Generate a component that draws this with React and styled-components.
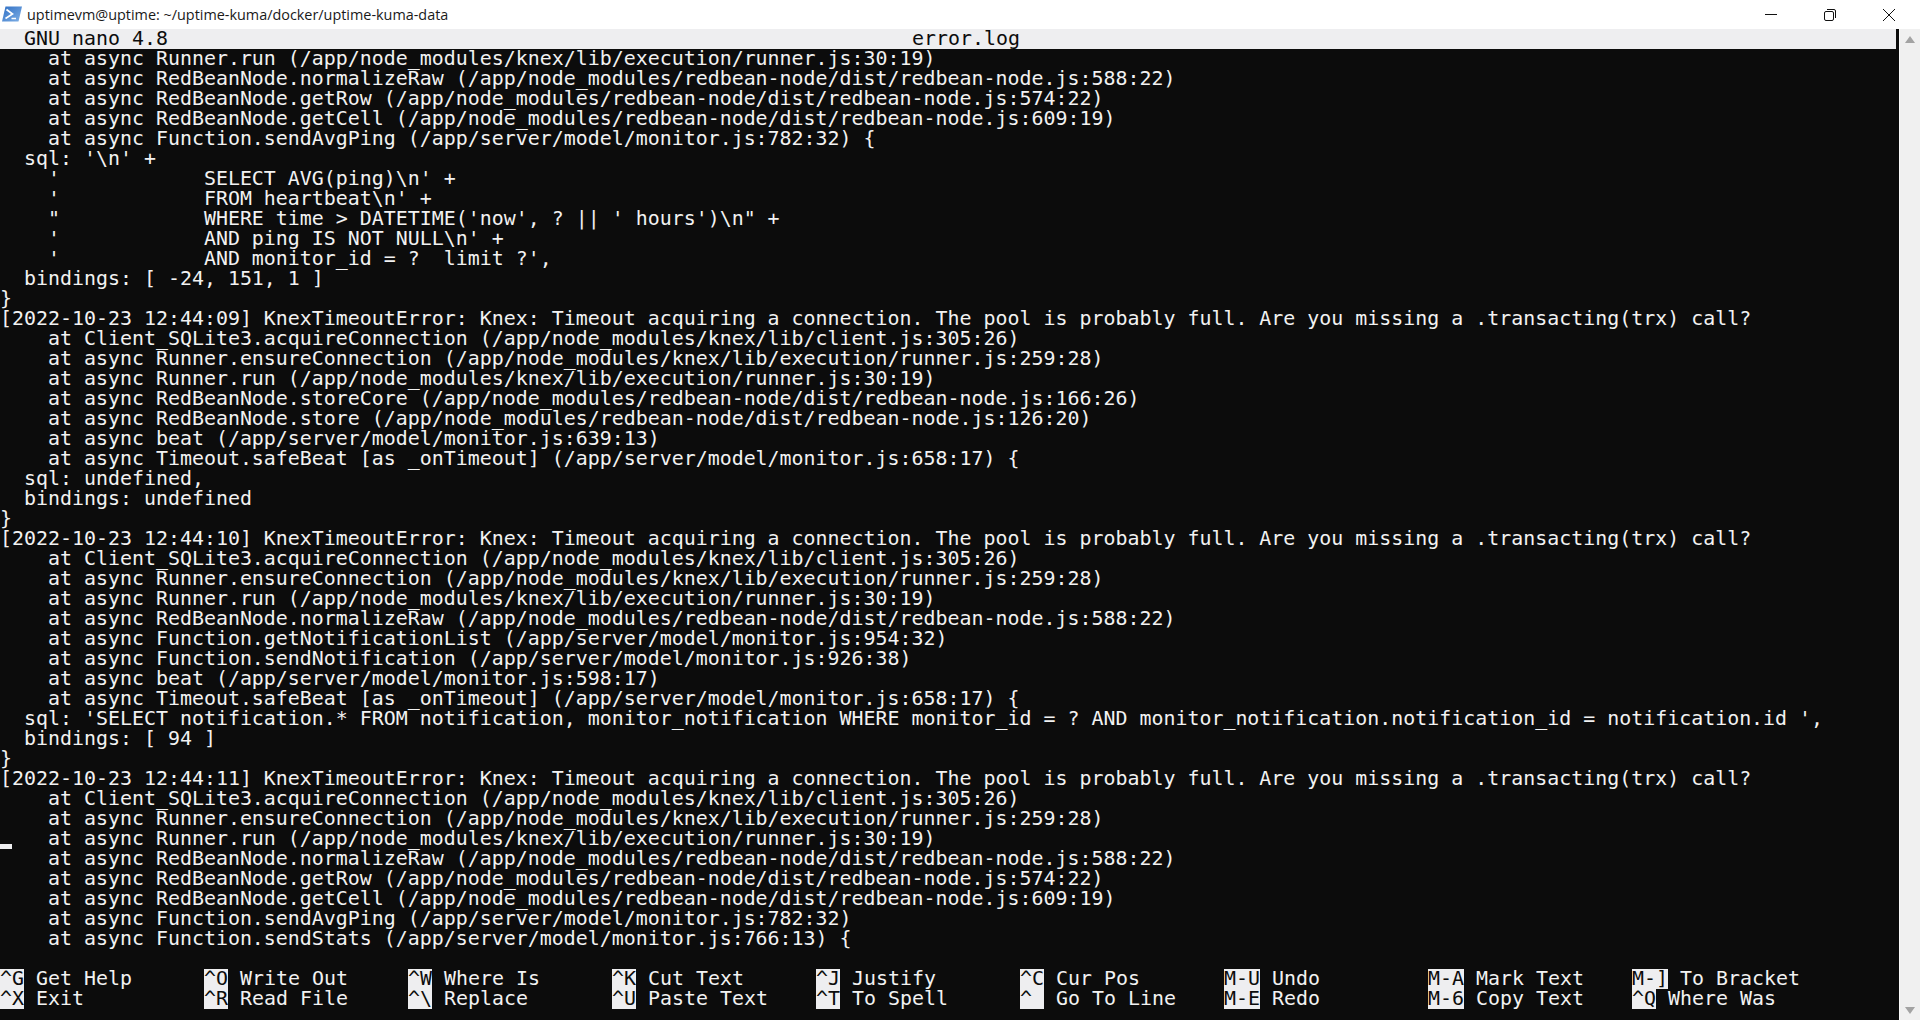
import React from "react";
import styled, { createGlobalStyle } from "styled-components";

const Global = createGlobalStyle`
  html, body { margin: 0; padding: 0; background: #0c0c0c; }
  #root { height: 100vh; }
`;

const Window = styled.div`
  display: flex;
  flex-direction: column;
  height: 1020px;
  overflow: hidden;
`;

const TitleBar = styled.header`
  flex: 0 0 29px;
  display: flex;
  align-items: center;
  background: #ffffff;
  padding-left: 2px;
`;

const AppIcon = styled.svg`
  width: 20px;
  height: 16px;
  flex: none;
  margin-bottom: 1px;
`;

const WindowTitle = styled.span`
  margin-left: 5px;
  flex: 1;
  font: 14.4px "Open Sans", "Noto Sans", sans-serif;
  color: #1a1a1a;
  white-space: pre;
  padding-bottom: 1px;
`;

const Controls = styled.div`
  display: flex;
  align-items: center;
  padding-right: 2px;
`;

const ControlButton = styled.button`
  width: 59px;
  height: 29px;
  padding: 0;
  border: 0;
  background: transparent;
  display: flex;
  align-items: center;
  justify-content: center;
`;

const ControlIcon = styled.svg`
  width: 14px;
  height: 14px;
  fill: none;
  stroke: #111;
  stroke-width: 1;
`;

const Body = styled.div`
  flex: 1;
  display: flex;
  min-height: 0;
`;

const Terminal = styled.main`
  flex: 1;
  background: #0c0c0c;
  padding-right: 3px;
  color: #f2f2f2;
  font: 19.93px/20px "DejaVu Sans Mono", monospace;
  display: flex;
  flex-direction: column;
`;

const NanoHeader = styled.div`
  flex: 0 0 20px;
  background: #eeeef0;
  color: #0c0c0c;
  display: grid;
  grid-template-columns: 912px 1fr;
  padding-left: 24px;
  white-space: pre;
`;

const NanoFile = styled.span`
  margin-left: -24px;
`;

const Buffer = styled.div`
  flex: 0 0 920px;
`;

const Line = styled.div`
  position: relative;
  height: 20px;
  white-space: pre;
`;

const Cursor = styled.span`
  position: absolute;
  left: 0;
  bottom: 0;
  width: 12px;
  height: 5px;
  background: #eeeef0;
`;

const Shortcuts = styled.div`
  display: grid;
  grid-template-columns: repeat(9, 204px);
  grid-auto-flow: column;
  grid-template-rows: 20px 20px;
`;

const Shortcut = styled.div`
  display: flex;
  gap: 12px;
  white-space: pre;
`;

const Key = styled.span`
  background: #eeeef0;
  color: #0c0c0c;
`;

const ScrollTrack = styled.aside`
  flex: 0 0 20px;
  border-left: 1px solid #fafafa;
  background: #f0f0f0;
  display: flex;
  flex-direction: column;
  align-items: center;
  justify-content: space-between;
  padding: 7px 0 6px;
`;

const Arrow = styled.svg`
  width: 10px;
  height: 7px;
  fill: #a3a3a3;
  margin-left: -1px;
`;

const lines = [
  "    at async Runner.run (/app/node_modules/knex/lib/execution/runner.js:30:19)",
  "    at async RedBeanNode.normalizeRaw (/app/node_modules/redbean-node/dist/redbean-node.js:588:22)",
  "    at async RedBeanNode.getRow (/app/node_modules/redbean-node/dist/redbean-node.js:574:22)",
  "    at async RedBeanNode.getCell (/app/node_modules/redbean-node/dist/redbean-node.js:609:19)",
  "    at async Function.sendAvgPing (/app/server/model/monitor.js:782:32) {",
  "  sql: '\\n' +",
  "    '            SELECT AVG(ping)\\n' +",
  "    '            FROM heartbeat\\n' +",
  "    \"            WHERE time > DATETIME('now', ? || ' hours')\\n\" +",
  "    '            AND ping IS NOT NULL\\n' +",
  "    '            AND monitor_id = ?  limit ?',",
  "  bindings: [ -24, 151, 1 ]",
  "}",
  "[2022-10-23 12:44:09] KnexTimeoutError: Knex: Timeout acquiring a connection. The pool is probably full. Are you missing a .transacting(trx) call?",
  "    at Client_SQLite3.acquireConnection (/app/node_modules/knex/lib/client.js:305:26)",
  "    at async Runner.ensureConnection (/app/node_modules/knex/lib/execution/runner.js:259:28)",
  "    at async Runner.run (/app/node_modules/knex/lib/execution/runner.js:30:19)",
  "    at async RedBeanNode.storeCore (/app/node_modules/redbean-node/dist/redbean-node.js:166:26)",
  "    at async RedBeanNode.store (/app/node_modules/redbean-node/dist/redbean-node.js:126:20)",
  "    at async beat (/app/server/model/monitor.js:639:13)",
  "    at async Timeout.safeBeat [as _onTimeout] (/app/server/model/monitor.js:658:17) {",
  "  sql: undefined,",
  "  bindings: undefined",
  "}",
  "[2022-10-23 12:44:10] KnexTimeoutError: Knex: Timeout acquiring a connection. The pool is probably full. Are you missing a .transacting(trx) call?",
  "    at Client_SQLite3.acquireConnection (/app/node_modules/knex/lib/client.js:305:26)",
  "    at async Runner.ensureConnection (/app/node_modules/knex/lib/execution/runner.js:259:28)",
  "    at async Runner.run (/app/node_modules/knex/lib/execution/runner.js:30:19)",
  "    at async RedBeanNode.normalizeRaw (/app/node_modules/redbean-node/dist/redbean-node.js:588:22)",
  "    at async Function.getNotificationList (/app/server/model/monitor.js:954:32)",
  "    at async Function.sendNotification (/app/server/model/monitor.js:926:38)",
  "    at async beat (/app/server/model/monitor.js:598:17)",
  "    at async Timeout.safeBeat [as _onTimeout] (/app/server/model/monitor.js:658:17) {",
  "  sql: 'SELECT notification.* FROM notification, monitor_notification WHERE monitor_id = ? AND monitor_notification.notification_id = notification.id ',",
  "  bindings: [ 94 ]",
  "}",
  "[2022-10-23 12:44:11] KnexTimeoutError: Knex: Timeout acquiring a connection. The pool is probably full. Are you missing a .transacting(trx) call?",
  "    at Client_SQLite3.acquireConnection (/app/node_modules/knex/lib/client.js:305:26)",
  "    at async Runner.ensureConnection (/app/node_modules/knex/lib/execution/runner.js:259:28)",
  "    at async Runner.run (/app/node_modules/knex/lib/execution/runner.js:30:19)",
  "    at async RedBeanNode.normalizeRaw (/app/node_modules/redbean-node/dist/redbean-node.js:588:22)",
  "    at async RedBeanNode.getRow (/app/node_modules/redbean-node/dist/redbean-node.js:574:22)",
  "    at async RedBeanNode.getCell (/app/node_modules/redbean-node/dist/redbean-node.js:609:19)",
  "    at async Function.sendAvgPing (/app/server/model/monitor.js:782:32)",
  "    at async Function.sendStats (/app/server/model/monitor.js:766:13) {",
  " ",
];

const CURSOR_LINE = 39;

const shortcuts = [
  ["^G", "Get Help"], ["^X", "Exit"],
  ["^O", "Write Out"], ["^R", "Read File"],
  ["^W", "Where Is"], ["^\\", "Replace"],
  ["^K", "Cut Text"], ["^U", "Paste Text"],
  ["^J", "Justify"], ["^T", "To Spell"],
  ["^C", "Cur Pos"], ["^_", "Go To Line"],
  ["M-U", "Undo"], ["M-E", "Redo"],
  ["M-A", "Mark Text"], ["M-6", "Copy Text"],
  ["M-]", "To Bracket"], ["^Q", "Where Was"],
];

export default function App() {
  return (
    <Window>
      <Global />
      <TitleBar>
        <AppIcon viewBox="0 0 20 16">
          <defs>
            <linearGradient id="psh" x1="0" y1="0" x2="1" y2="1">
              <stop offset="0" stopColor="#2f6fc4" />
              <stop offset="1" stopColor="#7fb0e6" />
            </linearGradient>
          </defs>
          <path d="M3.5 0.5H20L16.5 15.5H0Z" fill="url(#psh)" />
          <path d="M4.5 3.5L10.5 8L3.5 12.5" fill="none" stroke="#fff" strokeWidth="1.7" />
          <path d="M9.5 12.5H14" fill="none" stroke="#fff" strokeWidth="1.5" />
        </AppIcon>
        <WindowTitle>uptimevm@uptime: ~/uptime-kuma/docker/uptime-kuma-data</WindowTitle>
        <Controls>
          <ControlButton aria-label="Minimize">
            <ControlIcon viewBox="0 0 14 14"><path d="M1 6.5H13" /></ControlIcon>
          </ControlButton>
          <ControlButton aria-label="Restore">
            <ControlIcon viewBox="0 0 14 14">
              <rect x="1.5" y="3.5" width="9" height="9" rx="1.5" />
              <path d="M4 1.5H11A1.5 1.5 0 0 1 12.5 3V10" />
            </ControlIcon>
          </ControlButton>
          <ControlButton aria-label="Close">
            <ControlIcon viewBox="0 0 14 14"><path d="M1 1L13 13M13 1L1 13" /></ControlIcon>
          </ControlButton>
        </Controls>
      </TitleBar>
      <Body>
        <Terminal>
          <NanoHeader>
            <span>GNU nano 4.8</span>
            <NanoFile>error.log</NanoFile>
          </NanoHeader>
          <Buffer>
            {lines.map((text, i) => (
              <Line key={i}>
                {text}
                {i === CURSOR_LINE && <Cursor />}
              </Line>
            ))}
          </Buffer>
          <Shortcuts>
            {shortcuts.map(([k, label]) => (
              <Shortcut key={k}>
                <Key>{k}</Key>
                <span>{label}</span>
              </Shortcut>
            ))}
          </Shortcuts>
        </Terminal>
        <ScrollTrack>
          <Arrow viewBox="0 0 10 7"><path d="M5 0L10 7H0Z" /></Arrow>
          <Arrow viewBox="0 0 10 7"><path d="M5 7L0 0H10Z" /></Arrow>
        </ScrollTrack>
      </Body>
    </Window>
  );
}
